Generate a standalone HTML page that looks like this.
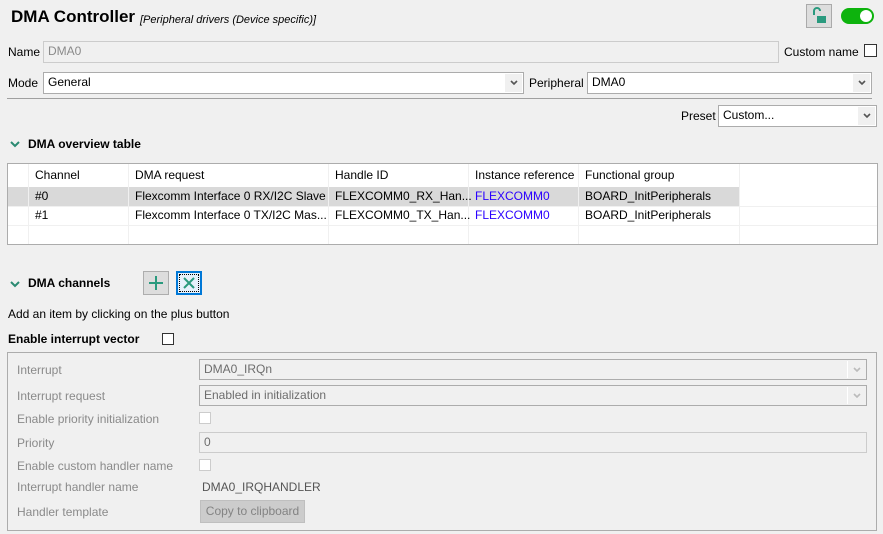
<!DOCTYPE html>
<html><head><meta charset="utf-8"><style>
*{box-sizing:border-box;margin:0;padding:0}
body{width:883px;height:534px;background:#f0f0f0;font-family:"Liberation Sans",sans-serif;font-size:12px;color:#000;position:relative;overflow:hidden}
.a{position:absolute;white-space:nowrap}
.t{line-height:14px}
.box{position:absolute;border:1px solid #acacac;background:#fff;padding-left:4px;line-height:19px}
.dd{position:absolute;right:1px;top:1px;bottom:1px;width:18px;background:#f0f0f0;border-left:1px solid #fff}
.dd svg{position:absolute;left:5px;top:6px}
.cb{position:absolute;width:12px;height:12px;border:1px solid #333;background:#fff}
.g{color:#8a8a8a}
.cell{position:absolute;line-height:19px;padding-left:6px;overflow:hidden}
.vl{position:absolute;width:1px;background:#f0f0f0}
</style></head><body>
<div class="a" style="left:11px;top:6px;font-size:17px;font-weight:bold;line-height:22px">DMA Controller</div>
<div class="a" style="left:140px;top:13px;font-size:11px;font-style:italic;line-height:14px">[Peripheral drivers (Device specific)]</div>
<div class="a" style="left:806px;top:4px;width:26px;height:24px;background:#ddd;border:1px solid #aaa"></div>
<svg class="a" style="left:809px;top:6px" width="20" height="20"><path d="M5 9 V5 a3 3 0 0 1 6 0" fill="none" stroke="#2a9a7e" stroke-width="2"/><rect x="8" y="10" width="9" height="7" fill="#2a9a7e"/></svg>
<div class="a" style="left:841px;top:8px;width:33px;height:16px;border-radius:8px;background:#0db30d"></div>
<div class="a" style="left:860px;top:10px;width:12px;height:12px;border-radius:6px;background:#fff"></div>

<div class="a t" style="left:8px;top:45px">Name</div>
<div class="box g" style="left:43px;top:41px;width:736px;height:22px;background:#f0f0f0;border-color:#ccc">DMA0</div>
<div class="a t" style="left:784px;top:45px">Custom name</div>
<div class="cb" style="left:864px;top:44px;width:13px;height:13px"></div>

<div class="a t" style="left:8px;top:76px">Mode</div>
<div class="box" style="left:43px;top:72px;width:481px;height:22px">General<div class="dd"><svg width="8" height="6"><path d="M1 1 L4 4 L7 1" stroke="#555" stroke-width="1.6" fill="none"/></svg></div></div>
<div class="a t" style="left:529px;top:76px">Peripheral</div>
<div class="box" style="left:587px;top:72px;width:285px;height:22px">DMA0<div class="dd"><svg width="8" height="6"><path d="M1 1 L4 4 L7 1" stroke="#555" stroke-width="1.6" fill="none"/></svg></div></div>
<div class="a" style="left:7px;top:98px;width:865px;height:1px;background:#a0a0a0"></div>

<div class="a t" style="left:681px;top:109px">Preset</div>
<div class="box" style="left:718px;top:105px;width:159px;height:22px">Custom...<div class="dd"><svg width="8" height="6"><path d="M1 1 L4 4 L7 1" stroke="#555" stroke-width="1.6" fill="none"/></svg></div></div>

<svg class="a" style="left:9px;top:139px" width="12" height="10"><path d="M2 3 L6 7 L10 3" stroke="#2a8a72" stroke-width="2" fill="none"/></svg>
<div class="a t" style="left:28px;top:137px;font-weight:bold">DMA overview table</div>

<div class="a" style="left:7px;top:163px;width:871px;height:82px;border:1px solid #acacac;background:#fff"></div>
<div class="a" style="left:8px;top:187px;width:731px;height:19px;background:#d9d9d9"></div>
<div class="a" style="left:8px;top:206px;width:869px;height:1px;background:#f0f0f0"></div>
<div class="a" style="left:8px;top:225px;width:869px;height:1px;background:#f0f0f0"></div>
<div class="vl" style="left:28px;top:164px;height:80px"></div>
<div class="vl" style="left:128px;top:164px;height:80px"></div>
<div class="vl" style="left:328px;top:164px;height:80px"></div>
<div class="vl" style="left:468px;top:164px;height:80px"></div>
<div class="vl" style="left:578px;top:164px;height:80px"></div>
<div class="vl" style="left:739px;top:164px;height:80px"></div>
<div class="cell" style="left:29px;top:166px;width:99px">Channel</div>
<div class="cell" style="left:129px;top:166px;width:199px">DMA request</div>
<div class="cell" style="left:329px;top:166px;width:139px">Handle ID</div>
<div class="cell" style="left:469px;top:166px;width:109px">Instance reference</div>
<div class="cell" style="left:579px;top:166px;width:160px">Functional group</div>
<div class="cell" style="left:29px;top:187px">#0</div>
<div class="cell" style="left:129px;top:187px">Flexcomm Interface 0 RX/I2C Slave</div>
<div class="cell" style="left:329px;top:187px">FLEXCOMM0_RX_Han...</div>
<div class="cell" style="left:469px;top:187px;color:#2a00ff">FLEXCOMM0</div>
<div class="cell" style="left:579px;top:187px">BOARD_InitPeripherals</div>
<div class="cell" style="left:29px;top:206px">#1</div>
<div class="cell" style="left:129px;top:206px">Flexcomm Interface 0 TX/I2C Mas...</div>
<div class="cell" style="left:329px;top:206px">FLEXCOMM0_TX_Han...</div>
<div class="cell" style="left:469px;top:206px;color:#2a00ff">FLEXCOMM0</div>
<div class="cell" style="left:579px;top:206px">BOARD_InitPeripherals</div>

<svg class="a" style="left:9px;top:279px" width="12" height="10"><path d="M2 3 L6 7 L10 3" stroke="#2a8a72" stroke-width="2" fill="none"/></svg>
<div class="a t" style="left:28px;top:276px;font-weight:bold">DMA channels</div>
<div class="a" style="left:143px;top:271px;width:26px;height:24px;background:#ddd;border:1px solid #adadad"></div>
<svg class="a" style="left:147px;top:274px" width="18" height="18"><path d="M9 2 V16 M2 9 H16" stroke="#2a9a7e" stroke-width="2"/></svg>
<div class="a" style="left:176px;top:271px;width:26px;height:24px;background:#e5f1fb;border:2px solid #0078d7"></div>
<div class="a" style="left:179px;top:274px;width:20px;height:18px;border:1px dotted #000"></div>
<svg class="a" style="left:181px;top:275px" width="16" height="16"><path d="M3 3 L13 13 M13 3 L3 13" stroke="#2a9a7e" stroke-width="2"/></svg>

<div class="a t" style="left:8px;top:307px">Add an item by clicking on the plus button</div>
<div class="a t" style="left:8px;top:332px;font-weight:bold">Enable interrupt vector</div>
<div class="cb" style="left:162px;top:333px"></div>

<div class="a" style="left:7px;top:352px;width:870px;height:179px;border:1px solid #acacac"></div>
<div class="a t g" style="left:17px;top:363px">Interrupt</div>
<div class="box g" style="left:199px;top:359px;width:668px;height:21px;background:#f0f0f0;line-height:18px;color:#6d6d6d">DMA0_IRQn<div class="dd"><svg width="8" height="6"><path d="M1 1 L4 4 L7 1" stroke="#bbb" stroke-width="1.6" fill="none"/></svg></div></div>
<div class="a t g" style="left:17px;top:389px">Interrupt request</div>
<div class="box g" style="left:199px;top:385px;width:668px;height:21px;background:#f0f0f0;line-height:18px;color:#6d6d6d">Enabled in initialization<div class="dd"><svg width="8" height="6"><path d="M1 1 L4 4 L7 1" stroke="#bbb" stroke-width="1.6" fill="none"/></svg></div></div>
<div class="a t g" style="left:17px;top:412px">Enable priority initialization</div>
<div class="cb" style="left:199px;top:412px;border-color:#ccc"></div>
<div class="a t g" style="left:17px;top:436px">Priority</div>
<div class="box g" style="left:199px;top:432px;width:668px;height:21px;background:#f0f0f0;border-color:#ccc;line-height:18px;color:#6d6d6d">0</div>
<div class="a t g" style="left:17px;top:459px">Enable custom handler name</div>
<div class="cb" style="left:199px;top:459px;border-color:#ccc"></div>
<div class="a t g" style="left:17px;top:480px">Interrupt handler name</div>
<div class="a t" style="left:202px;top:480px;color:#555">DMA0_IRQHANDLER</div>
<div class="a t g" style="left:17px;top:505px">Handler template</div>
<div class="a" style="left:200px;top:500px;width:105px;height:23px;background:#ccc;border:1px solid #bfbfbf;line-height:21px;text-align:center;color:#838383">Copy to clipboard</div>
</body></html>
